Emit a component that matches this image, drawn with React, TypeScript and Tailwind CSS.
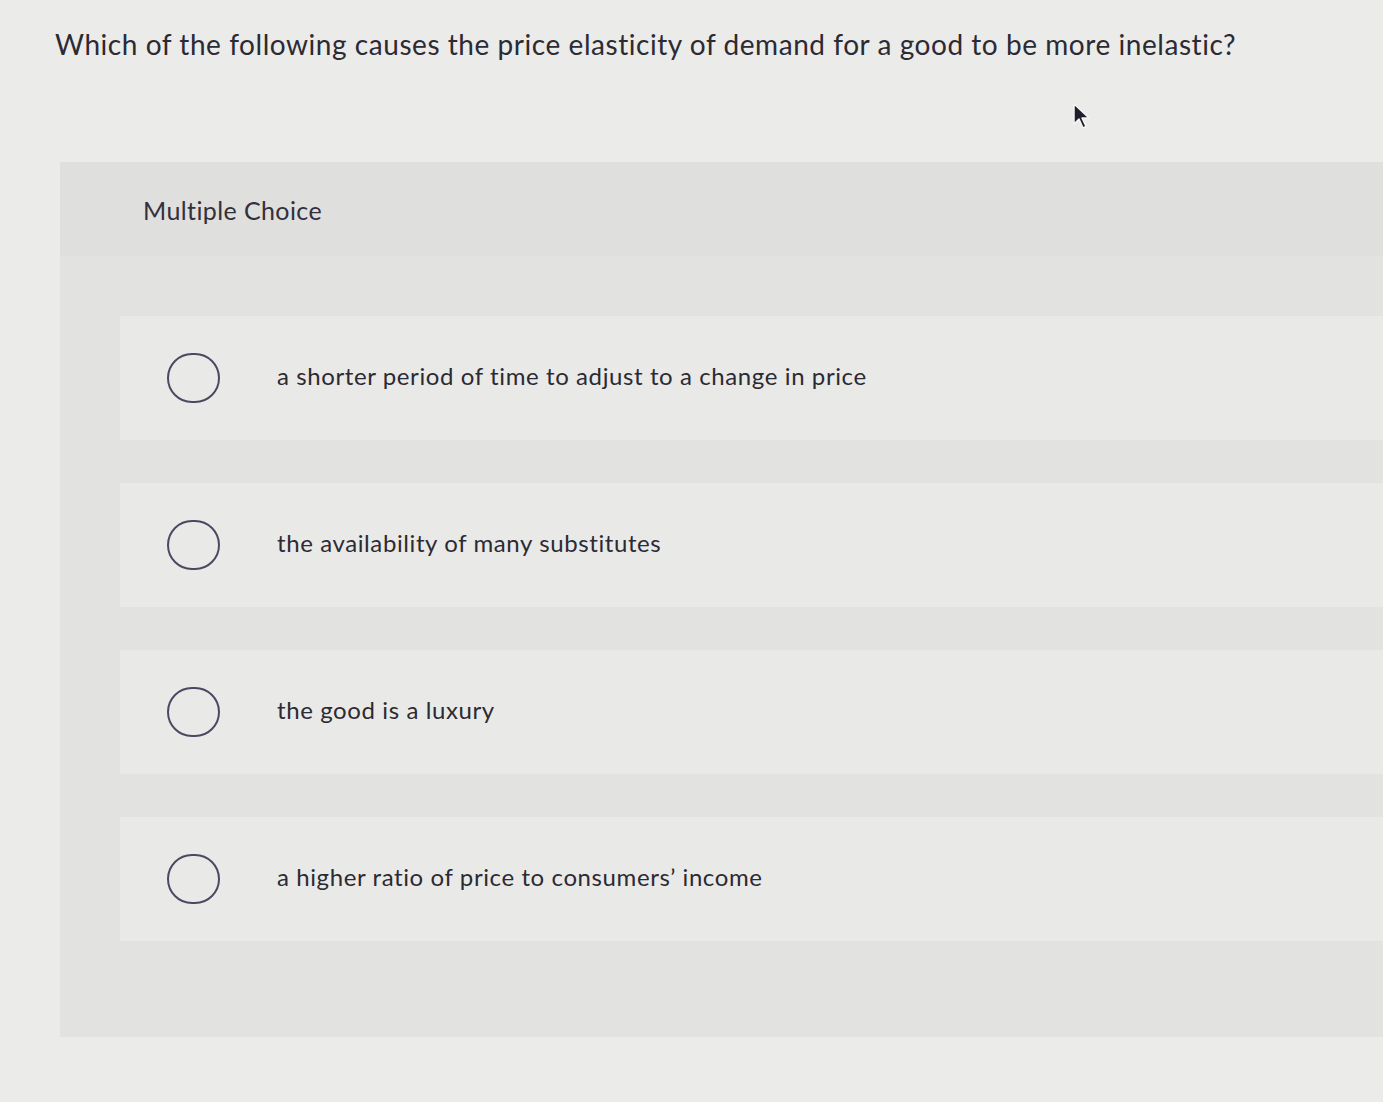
const options = [
  'a shorter period of time to adjust to a change in price',
  'the availability of many substitutes',
  'the good is a luxury',
  'a higher ratio of price to consumers\u2019 income',
];

export default function App() {
  return (
    <div className="relative min-h-[1102px] bg-[#ebebea] text-[#2c2a33] font-['Lato','Open_Sans',sans-serif]">
      <h1 className="pl-[55px] pt-[25px] text-[28px] leading-[38px] tracking-[0.55px]">
        Which of the following causes the price elasticity of demand for a good to be more inelastic?
      </h1>

      {/* mouse pointer */}
      <svg
        className="absolute left-[1072px] top-[102px]"
        width="20"
        height="28"
        viewBox="0 0 20 28"
      >
        <path
          d="M2 2 L2 22 L7 17 L11 26 L14 24.5 L10 16 L17 16 Z"
          fill="#1f1d2b"
          stroke="#f4f4f4"
          strokeWidth="1.5"
          strokeLinejoin="round"
        />
      </svg>

      <section className="ml-[60px] mt-[99px] bg-[#e2e2e1] pb-[96px]">
        <div className="flex h-[94px] items-center bg-[#dfdfde] pl-[83px] pt-[4px]">
          <span className="text-[25px] tracking-[0.4px] text-[#33303b]">Multiple Choice</span>
        </div>

        <div className="mt-[60px] flex flex-col gap-[43px] pl-[60px]">
          {options.map((text) => (
            <div
              key={text}
              className="flex h-[124px] items-center bg-[#e9e9e8] pl-[47px]"
            >
              <span className="h-[50px] w-[53px] shrink-0 rounded-full border-2 border-[#4b4862]" />
              <span className="ml-[57px] pb-[4px] text-[24px] tracking-[0.6px] text-[#2c2a33]">{text}</span>
            </div>
          ))}
        </div>
      </section>
    </div>
  );
}
